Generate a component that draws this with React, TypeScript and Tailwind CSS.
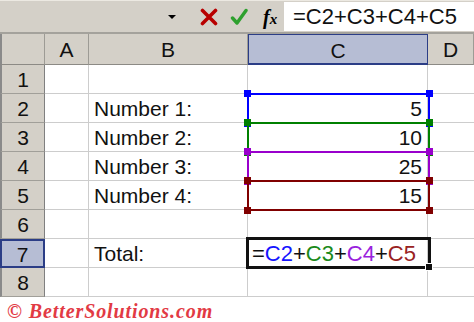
import React from "react";

type Range = { box: string; fill: string };

const ranges: Record<string, Range> = {
  blue: { box: "border-[#0000ff]", fill: "bg-[#0000ff]" },
  green: { box: "border-[#008000]", fill: "bg-[#008000]" },
  purple: { box: "border-[#9900cc]", fill: "bg-[#9900cc]" },
  red: { box: "border-[#800000]", fill: "bg-[#800000]" },
};

const rows = [
  { n: 1, label: "", value: "" },
  { n: 2, label: "Number 1:", value: "5", range: "blue" },
  { n: 3, label: "Number 2:", value: "10", range: "green" },
  { n: 4, label: "Number 3:", value: "25", range: "purple" },
  { n: 5, label: "Number 4:", value: "15", range: "red" },
  { n: 6, label: "", value: "" },
  { n: 7, label: "Total:", value: "", active: true },
  { n: 8, label: "", value: "" },
];

function RangeBox({ range }: { range: Range }) {
  return (
    <div className="absolute -left-[1px] -top-[1px] w-[183px] h-[31px] z-10 pointer-events-none">
      <div className={`absolute inset-0 border-2 ${range.box}`} />
      <div className={`absolute -left-[3px] -top-[3px] w-[7px] h-[7px] ${range.fill}`} />
      <div className={`absolute -right-[3px] -top-[3px] w-[7px] h-[7px] ${range.fill}`} />
      <div className={`absolute -left-[3px] -bottom-[3px] w-[7px] h-[7px] ${range.fill}`} />
      <div className={`absolute -right-[3px] -bottom-[3px] w-[7px] h-[7px] ${range.fill}`} />
    </div>
  );
}

function Formula() {
  return (
    <>
      <span>=</span>
      <span className="text-[#1515ff]">C2</span>
      <span>+</span>
      <span className="text-[#1a8a1a]">C3</span>
      <span>+</span>
      <span className="text-[#9922dd]">C4</span>
      <span>+</span>
      <span className="text-[#992222]">C5</span>
    </>
  );
}

function Toolbar() {
  return (
    <div className="flex items-center justify-end h-[34px] bg-[#d4d0c8] border-t border-t-[#ece9e2] border-b-2 border-b-[#a4a29c]">
      <svg width="8" height="4" viewBox="0 0 8 4" className="mr-[24px]">
        <path d="M0 0 H8 L4 4 Z" fill="#000" />
      </svg>
      <svg width="18" height="18" viewBox="0 0 18 18" className="mr-[12px]">
        <path d="M2.5 2.5 L15.5 15.5 M15.5 2.5 L2.5 15.5" stroke="#b80000" strokeWidth="3.6" strokeLinecap="round" />
      </svg>
      <svg width="18" height="18" viewBox="0 0 18 18" className="mr-[15px]">
        <path d="M2.5 10 L7 15 L16 2.5" stroke="#2ea02e" strokeWidth="3.4" fill="none" strokeLinecap="round" strokeLinejoin="round" />
      </svg>
      <div className="w-[18px] mr-[3px] font-['Liberation_Serif',serif] italic font-bold text-[20px] leading-none text-black">
        f<span className="text-[15px]">x</span>
      </div>
      <div className="w-[190px] h-[29px] bg-white pl-[9px] text-[22px] leading-[29px] text-[#111] whitespace-nowrap">
        =C2+C3+C4+C5
      </div>
    </div>
  );
}

function HeaderRow() {
  const cell = "h-[31px] pt-[3px] leading-[26px] text-center bg-[#d4d0c8] border-r border-r-[#9d9b95] border-b border-b-[#8c8a85]";
  return (
    <div className="flex">
      <div className={`w-[45px] border-l-2 border-l-[#8a8a8a] ${cell}`} />
      <div className={`w-[44px] ${cell}`}>A</div>
      <div className={`w-[159px] ${cell}`}>B</div>
      <div className="w-[180px] h-[31px] pt-[3px] leading-[25px] text-center bg-[#b6bdd4] border border-[#2b3d86] border-b-2">C</div>
      <div className={`w-[46px] ${cell}`}>D</div>
    </div>
  );
}

export default function App() {
  return (
    <div className="w-[474px] h-[322px] overflow-hidden bg-white font-['Liberation_Sans',Arial,sans-serif] text-[21px] text-[#111]">
      <Toolbar />
      <HeaderRow />
      {rows.map((r) => (
        <div key={r.n} className="flex h-[29px]">
          <div
            className={
              r.active
                ? "w-[45px] h-[29px] pt-[1px] leading-[26px] text-center bg-[#b6bdd4] border-2 border-[#2b3d86]"
                : "w-[45px] h-[29px] pt-[2px] leading-[26px] text-center bg-[#d4d0c8] border-l-2 border-l-[#8a8a8a] border-r border-r-[#808080] border-b border-b-[#a19f99]"
            }
          >
            {r.n}
          </div>
          <div className="w-[44px] border-r border-b border-[#cdcdcd]" />
          <div className="w-[159px] pl-[5px] pt-[2px] leading-[26px] border-r border-b border-[#cdcdcd] whitespace-nowrap">
            {r.label}
          </div>
          <div className="relative w-[180px] pr-[5px] pt-[2px] leading-[26px] text-right border-r border-b border-[#cdcdcd]">
            {r.value}
            {r.range && <RangeBox range={ranges[r.range]} />}
            {r.active && (
              <div className="absolute -left-[2px] -top-[2px] w-[185px] h-[32px] border-[3px] border-[#111] z-20 pl-[3px] pt-[1px] text-[22px] leading-[25px] text-left whitespace-nowrap">
                <Formula />
                <div className="absolute -right-[5px] -bottom-[5px] w-[8px] h-[8px] bg-[#111] border border-white" />
              </div>
            )}
          </div>
          <div className="w-[46px] border-b border-[#cdcdcd]" />
        </div>
      ))}
      <div className="pl-[7px] pt-[3px] font-['Liberation_Serif',serif] italic font-bold text-[20px] tracking-[0.9px] leading-[22px] text-[#e23a44] whitespace-nowrap">
        © BetterSolutions.com
      </div>
    </div>
  );
}
